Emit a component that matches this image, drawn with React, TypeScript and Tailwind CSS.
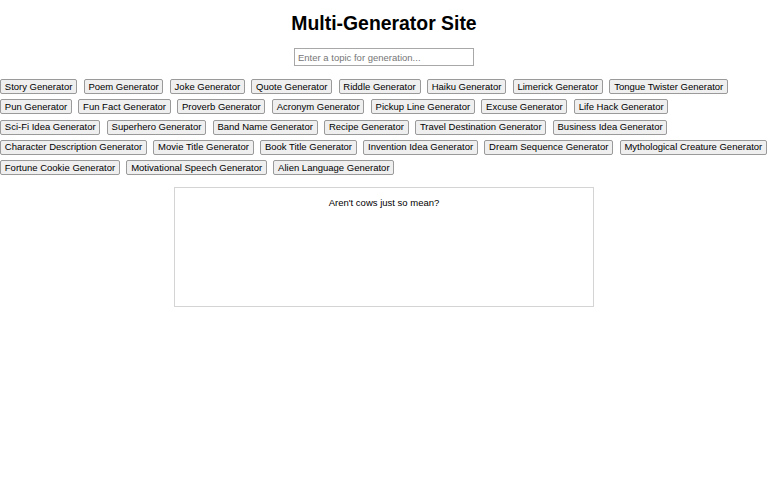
import { useState } from 'react';

const generators = [
  'Story Generator',
  'Poem Generator',
  'Joke Generator',
  'Quote Generator',
  'Riddle Generator',
  'Haiku Generator',
  'Limerick Generator',
  'Tongue Twister Generator',
  'Pun Generator',
  'Fun Fact Generator',
  'Proverb Generator',
  'Acronym Generator',
  'Pickup Line Generator',
  'Excuse Generator',
  'Life Hack Generator',
  'Sci-Fi Idea Generator',
  'Superhero Generator',
  'Band Name Generator',
  'Recipe Generator',
  'Travel Destination Generator',
  'Business Idea Generator',
  'Character Description Generator',
  'Movie Title Generator',
  'Book Title Generator',
  'Invention Idea Generator',
  'Dream Sequence Generator',
  'Mythological Creature Generator',
  'Fortune Cookie Generator',
  'Motivational Speech Generator',
  'Alien Language Generator',
];

const App = () => {
  const [topic, setTopic] = useState('');
  const [output, setOutput] = useState("Aren't cows just so mean?");

  const handleGenerate = (name: string) => {
    setOutput(topic ? `${name}: ${topic}` : "Aren't cows just so mean?");
  };

  return (
    <div className="min-h-[480px] bg-white text-black font-['Liberation_Sans',Arial,sans-serif]">
      <h1 className="pt-[12px] text-center text-[19.4px] leading-[23px] font-bold">Multi-Generator Site</h1>

      <div className="mt-[13px] flex justify-center">
        <input
          type="text"
          value={topic}
          onChange={(e) => setTopic(e.target.value)}
          placeholder="Enter a topic for generation..."
          className="w-[180px] h-[18px] px-[3px] border border-[#a8a8a8] text-[9.5px] outline-none placeholder:text-[#767676]"
        />
      </div>

      {/* Generator buttons */}
      <div className="mt-[13px] flex flex-wrap gap-x-[6.4px] gap-y-[5.3px]">
        {generators.map((name) => (
          <button
            key={name}
            onClick={() => handleGenerate(name)}
            className="h-[15px] px-[3.8px] border border-[#9a9a9a] rounded-[2px] bg-[#efefef] text-[9.5px] leading-[10px] text-black whitespace-nowrap"
          >
            {name}
          </button>
        ))}
      </div>

      <div className="mt-[11.8px] flex justify-center">
        <div className="w-[420px] h-[120px] border border-[#d4d4d4] pt-[9px] text-center text-[9.5px] leading-[11px]">
          {output}
        </div>
      </div>
    </div>
  );
};

export default App;
